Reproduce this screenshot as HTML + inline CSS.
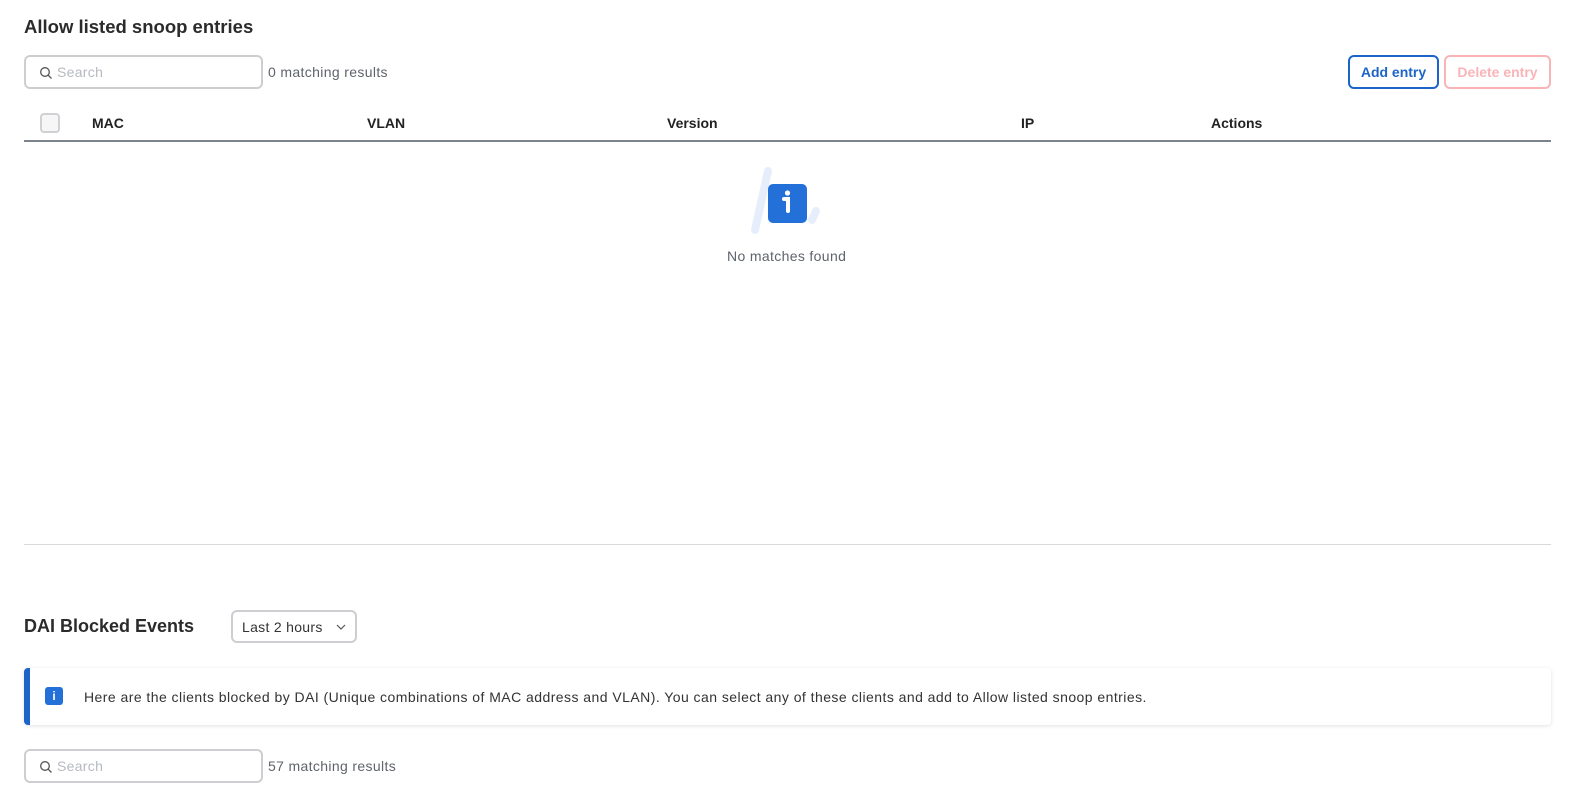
<!DOCTYPE html>
<html><head><style>
*{box-sizing:border-box;margin:0;padding:0}
html,body{width:1572px;height:810px;overflow:hidden}
body{background:#fff;font-family:"Liberation Sans",sans-serif;position:relative;color:#222}
.a{position:absolute}
.search{border:2px solid #ccced2;border-radius:6px;width:239px;height:34px;font-size:14px;color:#b6bac0;padding:7px 0 0 31px;letter-spacing:.3px}
.search svg{position:absolute;left:13px;top:9px}
.muted{font-size:14px;color:#5f636a;letter-spacing:.35px}
.th{font-size:14px;font-weight:bold;color:#222;top:115px}
.btn{border:2px solid;border-radius:6px;height:34px;font-size:14px;font-weight:bold;text-align:center;line-height:30px}
</style></head><body>
<div class="a" style="left:24px;top:16px;font-size:18.5px;font-weight:bold;color:#2b2b2b">Allow listed snoop entries</div>
<div class="a search" style="left:24px;top:55px"><svg width="14" height="14" viewBox="0 0 14 14"><circle cx="6" cy="6" r="4.3" fill="none" stroke="#555" stroke-width="1.3"/><line x1="9.2" y1="9.2" x2="12.5" y2="12.5" stroke="#555" stroke-width="1.3"/></svg>Search</div>
<div class="a muted" style="left:268px;top:64px">0 matching results</div>
<div class="a btn" style="left:1348px;top:55px;width:91px;border-color:#1d64c8;color:#1d64c8">Add entry</div>
<div class="a btn" style="left:1444px;top:55px;width:107px;border-color:#f9b4b8;color:#f9b4b8">Delete entry</div>
<div class="a" style="left:40px;top:113px;width:20px;height:20px;border:2px solid #cfd1d4;border-radius:4px;background:#f6f6f6"></div>
<div class="a th" style="left:92px">MAC</div>
<div class="a th" style="left:367px">VLAN</div>
<div class="a th" style="left:667px">Version</div>
<div class="a th" style="left:1021px">IP</div>
<div class="a th" style="left:1211px">Actions</div>
<div class="a" style="left:24px;top:140px;width:1527px;height:2px;background:#7d838c"></div>
<svg class="a" style="left:750px;top:166px" width="74" height="68" viewBox="0 0 74 68"><line x1="18" y1="5" x2="5" y2="64" stroke="#e6eefb" stroke-width="8" stroke-linecap="round"/><line x1="66" y1="45" x2="62" y2="54" stroke="#e6eefb" stroke-width="8" stroke-linecap="round"/><rect x="18" y="18" width="39" height="39" rx="5" fill="#2370d8"/><circle cx="37.5" cy="27" r="2.6" fill="#fff"/><path d="M34 33h4v12" fill="none" stroke="#fff" stroke-width="4" stroke-linecap="round"/></svg>
<div class="a muted" style="left:727px;top:248px">No matches found</div>
<div class="a" style="left:24px;top:544px;width:1527px;height:1px;background:#d8d9dc"></div>
<div class="a" style="left:24px;top:616px;font-size:18px;font-weight:bold;color:#2b2b2b">DAI Blocked Events</div>
<div class="a" style="left:231px;top:610px;width:126px;height:33px;border:2px solid #ccced2;border-radius:6px;font-size:14px;color:#333;padding:7px 0 0 9px;letter-spacing:.3px">Last 2 hours<svg style="position:absolute;left:103px;top:12px" width="10" height="6" viewBox="0 0 10 6"><path d="M1 1l4 4 4-4" fill="none" stroke="#555" stroke-width="1.2"/></svg></div>
<div class="a" style="left:24px;top:668px;width:1527px;height:57px;border-radius:4px;box-shadow:0 1px 4px rgba(0,0,0,.12);border-left:6px solid #1d64c8;background:#fff"></div>
<div class="a" style="left:45px;top:687px;width:18px;height:18px;border-radius:3px;background:#2370d8;color:#fff;font-size:12px;font-weight:bold;text-align:center;line-height:18px">i</div>
<div class="a" style="left:84px;top:689px;font-size:14px;color:#333;letter-spacing:.45px">Here are the clients blocked by DAI (Unique combinations of MAC address and VLAN). You can select any of these clients and add to Allow listed snoop entries.</div>
<div class="a search" style="left:24px;top:749px"><svg width="14" height="14" viewBox="0 0 14 14"><circle cx="6" cy="6" r="4.3" fill="none" stroke="#555" stroke-width="1.3"/><line x1="9.2" y1="9.2" x2="12.5" y2="12.5" stroke="#555" stroke-width="1.3"/></svg>Search</div>
<div class="a muted" style="left:268px;top:758px">57 matching results</div>
</body></html>
